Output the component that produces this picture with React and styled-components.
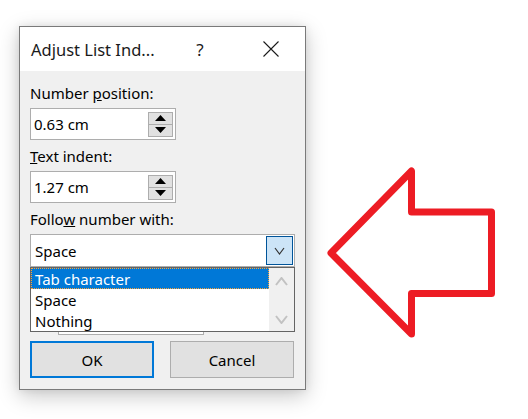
import React from "react";
import styled, { createGlobalStyle } from "styled-components";

const Global = createGlobalStyle`
  html, body { margin: 0; padding: 0; background: #ffffff; }
  body { font-family: "Noto Sans", "Open Sans", sans-serif; color: #000; }
  * { box-sizing: border-box; }
`;

const Page = styled.div`
  width: 528px;
  height: 419px;
  display: flex;
  align-items: flex-start;
  padding: 26px 0 0 19px;
  overflow: hidden;
`;

const Dialog = styled.div`
  width: 287px;
  height: 364px;
  border: 1px solid #7a7a7a;
  background: #f0f0f0;
  box-shadow: 0 6px 20px rgba(0, 0, 0, 0.22), 0 0 8px rgba(0, 0, 0, 0.08);
  display: flex;
  flex-direction: column;
  flex-shrink: 0;
`;

const TitleBar = styled.div`
  height: 44px;
  background: #ffffff;
  display: flex;
  align-items: center;
  padding-left: 11px;
`;

const Title = styled.div`
  flex: 1;
  font-size: 16.5px;
  color: #1a1a1a;
  white-space: nowrap;
`;

const TitleButton = styled.div`
  width: ${(p) => p.$w}px;
  height: 100%;
  display: flex;
  align-items: center;
  justify-content: center;
  font-size: 17px;
  color: #1a1a1a;
`;

const Body = styled.div`
  flex: 1;
  display: flex;
  flex-direction: column;
  padding: 12px 10px 11px 10px;
`;

const Label = styled.div`
  font-size: 15px;
  line-height: 20px;
  margin-bottom: 5px;
  white-space: nowrap;
`;

const Field = styled.div`
  margin-bottom: ${(p) => p.$gap ?? 6}px;
  margin-left: ${(p) => p.$indent ?? 0}px;
`;

const SpinBox = styled.div`
  width: 146px;
  height: 32px;
  border: 1px solid #adadad;
  background: #ffffff;
  display: flex;
  align-items: center;
  padding: 0 2px 0 2px;
`;

const SpinText = styled.div`
  flex: 1;
  font-size: 15px;
  padding-left: 1px;
`;

const SpinButtons = styled.div`
  display: flex;
  flex-direction: column;
  width: 25px;
`;

const SpinButton = styled.div`
  height: 13px;
  background: #e1e1e1;
  border: 1px solid #adadad;
  display: flex;
  align-items: center;
  justify-content: center;
  & + & { margin-top: -1px; }
`;

const ComboWrap = styled.div`
  position: relative;
  width: 265px;
`;

const Combo = styled.div`
  height: 33px;
  border: 1px solid #adadad;
  background: #ffffff;
  display: flex;
  align-items: center;
  padding: 1px 1px 1px 4px;
`;

const ComboText = styled.div`
  flex: 1;
  font-size: 15px;
`;

const DropButton = styled.div`
  width: 27px;
  height: 100%;
  background: #cce4f7;
  border: 1px solid #005499;
  display: flex;
  align-items: center;
  justify-content: center;
`;

const ListPopup = styled.div`
  position: absolute;
  top: 100%;
  left: 0;
  width: 265px;
  height: 65px;
  border: 1px solid #646464;
  background: #ffffff;
  display: flex;
  z-index: 2;
`;

const Items = styled.div`
  flex: 1;
  display: flex;
  flex-direction: column;
`;

const Item = styled.div`
  height: 21px;
  font-size: 15px;
  line-height: 20px;
  padding-left: 3px;
  background: ${(p) => (p.$selected ? "#0078d7" : "transparent")};
  color: ${(p) => (p.$selected ? "#ffffff" : "#000000")};
  border: 1px dotted ${(p) => (p.$selected ? "#f7a33b" : "transparent")};
  white-space: nowrap;
`;

const ScrollTrack = styled.div`
  width: 25px;
  background: #f0f0f0;
  display: flex;
  flex-direction: column;
  justify-content: space-between;
  align-items: center;
  padding: 9px 0 7px;
`;

/* row under the open list, fully covered by it */
const CoveredRow = styled.div`
  height: 24px;
  margin: 3px 0 9px;
`;

const ButtonRow = styled.div`
  display: flex;
  justify-content: space-between;
  margin-top: auto;
  width: 264px;
`;

const Button = styled.div`
  width: 124px;
  height: 37px;
  background: #e1e1e1;
  border: ${(p) => (p.$default ? "2px solid #0078d7" : "1px solid #adadad")};
  display: flex;
  align-items: center;
  justify-content: center;
  font-size: 15px;
`;

const ArrowCanvas = styled.svg`
  flex-shrink: 0;
  display: block;
`;

const Up = () => (
  <svg width="11" height="6" viewBox="0 0 11 6">
    <polygon points="0,6 5.5,0 11,6" fill="#000" />
  </svg>
);

const Down = () => (
  <svg width="11" height="6" viewBox="0 0 11 6">
    <polygon points="0,0 11,0 5.5,6" fill="#000" />
  </svg>
);

const Chevron = ({ up, color = "#333", w = 11, h = 6, sw = 1.2 }) => (
  <svg width={w} height={h + 2} viewBox={`0 0 ${w} ${h + 2}`}>
    <polyline
      points={up ? `1,${h + 1} ${w / 2},1 ${w - 1},${h + 1}` : `1,1 ${w / 2},${h + 1} ${w - 1},1`}
      fill="none"
      stroke={color}
      strokeWidth={sw}
    />
  </svg>
);

const Spin = ({ value }) => (
  <SpinBox>
    <SpinText>{value}</SpinText>
    <SpinButtons>
      <SpinButton><Up /></SpinButton>
      <SpinButton><Down /></SpinButton>
    </SpinButtons>
  </SpinBox>
);

export default function App() {
  return (
    <>
      <Global />
      <Page>
        <Dialog>
          <TitleBar>
            <Title>Adjust List Ind...</Title>
            <TitleButton $w={74}>?</TitleButton>
            <TitleButton $w={68}>
              <svg width="16" height="16" viewBox="0 0 16 16">
                <path d="M0.5 0.5 L15.5 15.5 M15.5 0.5 L0.5 15.5" stroke="#1a1a1a" strokeWidth="1.1" fill="none" />
              </svg>
            </TitleButton>
          </TitleBar>
          <Body>
            <Label>Number <u>p</u>osition:</Label>
            <Field>
              <Spin value="0.63 cm" />
            </Field>
            <Label><u>T</u>ext indent:</Label>
            <Field>
              <Spin value="1.27 cm" />
            </Field>
            <Label>Follo<u>w</u> number with:</Label>
            <ComboWrap>
              <Combo>
                <ComboText>Space</ComboText>
                <DropButton>
                  <Chevron />
                </DropButton>
              </Combo>
              <ListPopup>
                <Items>
                  <Item $selected>Tab character</Item>
                  <Item>Space</Item>
                  <Item>Nothing</Item>
                </Items>
                <ScrollTrack>
                  <Chevron up color="#c2c2c2" w={13} h={7} sw={2} />
                  <Chevron color="#c2c2c2" w={13} h={7} sw={2} />
                </ScrollTrack>
              </ListPopup>
            </ComboWrap>
            <CoveredRow />
            <Field $indent={28} $gap={0}>
              <Spin value="" />
            </Field>
            <ButtonRow>
              <Button $default>OK</Button>
              <Button>Cancel</Button>
            </ButtonRow>
          </Body>
        </Dialog>
        <ArrowCanvas width="222" height="393" viewBox="306 26 222 393">
          <polygon
            points="331,253 411.5,171 411.5,212 491.5,212 491.5,293.5 411.5,293.5 411.5,334"
            fill="none"
            stroke="#ed1c24"
            strokeWidth="7"
            strokeLinejoin="round"
          />
        </ArrowCanvas>
      </Page>
    </>
  );
}
